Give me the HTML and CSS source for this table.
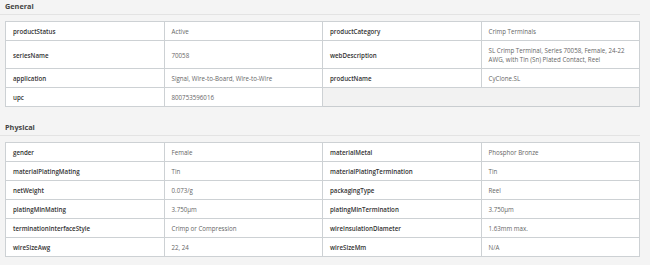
FILE: index.html
```html
<!DOCTYPE html>
<html>
<head>
<meta charset="utf-8">
<link rel="stylesheet" href="styles.css">
</head>
<body>
<div class="page">
  <section class="group">
    <h2 class="group-title">General</h2>
    <table class="attrs">
      <colgroup><col class="c"><col class="c"><col class="c"><col class="c"></colgroup>
      <tr><td class="k">productStatus</td><td class="v">Active</td><td class="k">productCategory</td><td class="v">Crimp Terminals</td></tr>
      <tr><td class="k">seriesName</td><td class="v">70058</td><td class="k">webDescription</td><td class="v">SL Crimp Terminal, Series 70058, Female, 24-22 AWG, with Tin (Sn) Plated Contact, Reel</td></tr>
      <tr><td class="k">application</td><td class="v">Signal, Wire-to-Board, Wire-to-Wire</td><td class="k">productName</td><td class="v">CyClone.SL</td></tr>
      <tr><td class="k">upc</td><td class="v">800753596016</td></tr>
    </table>
  </section>
  <section class="group">
    <h2 class="group-title">Physical</h2>
    <table class="attrs">
      <colgroup><col class="c"><col class="c"><col class="c"><col class="c"></colgroup>
      <tr><td class="k">gender</td><td class="v">Female</td><td class="k">materialMetal</td><td class="v">Phosphor Bronze</td></tr>
      <tr><td class="k">materialPlatingMating</td><td class="v">Tin</td><td class="k">materialPlatingTermination</td><td class="v">Tin</td></tr>
      <tr><td class="k">netWeight</td><td class="v">0.073/g</td><td class="k">packagingType</td><td class="v">Reel</td></tr>
      <tr><td class="k">platingMinMating</td><td class="v">3.750µm</td><td class="k">platingMinTermination</td><td class="v">3.750µm</td></tr>
      <tr><td class="k">terminationInterfaceStyle</td><td class="v">Crimp or Compression</td><td class="k">wireInsulationDiameter</td><td class="v">1.63mm max.</td></tr>
      <tr><td class="k">wireSizeAwg</td><td class="v">22, 24</td><td class="k">wireSizeMm</td><td class="v">N/A</td></tr>
    </table>
  </section>
</div>
</body>
</html>
```
FILE: styles.css
```css
html, body {
  margin: 0;
  padding: 0;
  background: #f4f4f4;
}
body {
  font-family: "Open Sans", "Liberation Sans", sans-serif;
  color: #333;
}
.page {
  width: 640px;
}
.group {
  margin-bottom: 14px;
}
.group-title {
  margin: 0;
  padding: 0 5px 2px;
  font-size: 7.3px;
  line-height: 12px;
  font-weight: 700;
  color: #444;
  border-bottom: 1px solid #e3e3e3;
}
.attrs {
  margin: 6px 0 0 5px;
  width: 635px;
  table-layout: fixed;
  border-collapse: collapse;
  border: 1px solid #c9cdd0;
  background: #f2f2f2;
}
.attrs td {
  background: #fff;
  border: 1px solid #cdd1d4;
  padding: 5px 7px 4px;
  font-size: 6.2px;
  line-height: 9px;
  vertical-align: middle;
}
.attrs .k {
  font-weight: 600;
  color: #333;
}
.attrs .v {
  font-weight: 400;
  color: #666;
}
```
